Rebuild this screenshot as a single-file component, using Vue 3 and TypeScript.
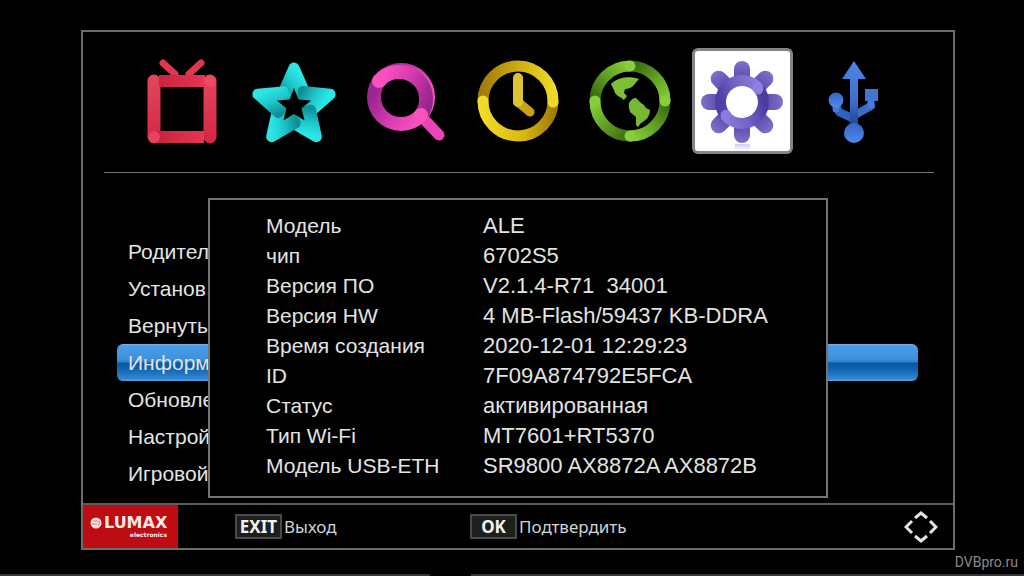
<script setup lang="ts">
import { ref } from 'vue'

interface InfoRow {
  label: string
  value: string
}

const tabs = [
  { id: 'tv', title: 'TV' },
  { id: 'star', title: 'Favourites' },
  { id: 'search', title: 'Search' },
  { id: 'clock', title: 'Time' },
  { id: 'globe', title: 'Network' },
  { id: 'gear', title: 'Settings' },
  { id: 'usb', title: 'USB' },
]
const activeTab = ref('gear')

const menu: string[] = ['Родител', 'Установ', 'Вернуть', 'Информ', 'Обновле', 'Настрой', 'Игровой']
const selected = ref(3)

const info: InfoRow[] = [
  { label: 'Модель', value: 'ALE' },
  { label: 'чип', value: '6702S5' },
  { label: 'Версия ПО', value: 'V2.1.4-R71  34001' },
  { label: 'Версия HW', value: '4 MB-Flash/59437 KB-DDRA' },
  { label: 'Время создания', value: '2020-12-01 12:29:23' },
  { label: 'ID', value: '7F09A874792E5FCA' },
  { label: 'Статус', value: 'активированная' },
  { label: 'Тип Wi-Fi', value: 'MT7601+RT5370' },
  { label: 'Модель USB-ETH', value: 'SR9800 AX8872A AX8872B' },
]

const armAngles = [0, 72, 144, 216, 288]
const toothAngles = [0, 45, 90, 135, 180, 225, 270, 315]
</script>

<template>
  <div class="screen">
    <div class="frame">
      <nav class="tabs">
        <button
          v-for="tab in tabs"
          :key="tab.id"
          type="button"
          class="tab"
          :class="{ active: tab.id === activeTab }"
          :aria-label="tab.title"
          @click="activeTab = tab.id"
        >
          <svg v-if="tab.id === 'tv'" class="icon" viewBox="-50 -50 100 100" fill="none" stroke-linecap="round">
            <defs>
              <linearGradient id="tvH" x1="-35" y1="0" x2="35" y2="0" gradientUnits="userSpaceOnUse">
                <stop offset="0" stop-color="#c0203a" /><stop offset="1" stop-color="#f03a58" />
              </linearGradient>
              <linearGradient id="tvV" x1="0" y1="-26" x2="0" y2="42" gradientUnits="userSpaceOnUse">
                <stop offset="0" stop-color="#e2465c" /><stop offset="1" stop-color="#d42742" />
              </linearGradient>
            </defs>
            <path d="M-19 -38L-7 -27M19 -38L7 -27" stroke="#dc3850" stroke-width="7" />
            <path d="M-28 -20V36M28 -20V36" stroke="url(#tvV)" stroke-width="13" />
            <path d="M-23 -20H23M-28 36H22" stroke="url(#tvH)" stroke-width="12" stroke-linecap="butt" />
            <circle cx="-28" cy="36" r="6" fill="#e8425c" />
            <circle cx="28" cy="-20" r="6" fill="#e84a64" />
          </svg>

          <svg v-else-if="tab.id === 'star'" class="icon" viewBox="-50 -50 100 100">
            <defs>
              <linearGradient id="arm" x1="-12" y1="-12" x2="7" y2="-30" gradientUnits="userSpaceOnUse">
                <stop offset="0" stop-color="#0e8f95" /><stop offset="0.5" stop-color="#1cc6ca" /><stop offset="1" stop-color="#2ce6e6" />
              </linearGradient>
            </defs>
            <g transform="translate(0 5)">
              <g v-for="a in armAngles" :key="a" :transform="`rotate(${a})`">
                <path d="M0 -38L10 -15L4 -9L-11 -13Z" fill="url(#arm)" stroke="url(#arm)" stroke-width="11" stroke-linejoin="round" />
              </g>
              <path d="M0 -18L4.500 -6.500L17 -5.600L7.500 2.400L10.600 14.600L0 8L-10.600 14.600L-7.500 2.400L-17 -5.600L-4.500 -6.500Z" fill="#000" />
            </g>
          </svg>

          <svg v-else-if="tab.id === 'search'" class="icon" viewBox="-50 -50 100 100" fill="none" stroke-linecap="round">
            <defs>
              <linearGradient id="lensA" x1="-26" y1="-20" x2="23" y2="0" gradientUnits="userSpaceOnUse">
                <stop offset="0" stop-color="#fa4fc0" /><stop offset="0.5" stop-color="#d63cb0" /><stop offset="1" stop-color="#98268f" />
              </linearGradient>
              <linearGradient id="lensB" x1="15" y1="15" x2="-31" y2="-10" gradientUnits="userSpaceOnUse">
                <stop offset="0" stop-color="#fc52bd" /><stop offset="0.5" stop-color="#d63bb2" /><stop offset="1" stop-color="#97268d" />
              </linearGradient>
            </defs>
            <path d="M15 15L33 34" stroke="#ea45b4" stroke-width="11" />
            <circle cx="-5" cy="-4" r="27" stroke="url(#lensB)" stroke-width="14" />
            <path d="M-27 -20A27 27 0 0 1 14.100 15" stroke="url(#lensA)" stroke-width="14" stroke-linecap="butt" />
            <circle cx="-27" cy="-20" r="7" fill="#fa50c0" />
            <circle cx="15" cy="14" r="7" fill="#fc52bd" />
          </svg>

          <svg v-else-if="tab.id === 'clock'" class="icon" viewBox="-50 -50 100 100" fill="none" stroke-linecap="round">
            <defs>
              <linearGradient id="dialA" x1="-36" y1="0" x2="36" y2="0" gradientUnits="userSpaceOnUse">
                <stop offset="0" stop-color="#a27c08" /><stop offset="0.550" stop-color="#d0b010" /><stop offset="1" stop-color="#f0da28" />
              </linearGradient>
              <linearGradient id="dialB" x1="-36" y1="0" x2="36" y2="0" gradientUnits="userSpaceOnUse">
                <stop offset="0" stop-color="#f0da28" /><stop offset="0.550" stop-color="#dcbb10" /><stop offset="1" stop-color="#a27c08" />
              </linearGradient>
            </defs>
            <path d="M35 0A35 35 0 0 1 -35 0" stroke="url(#dialB)" stroke-width="11" stroke-linecap="butt" />
            <path d="M-35 0A35 35 0 0 1 35 0" stroke="url(#dialA)" stroke-width="11" stroke-linecap="butt" />
            <circle cx="-35" cy="0" r="5.500" fill="#f0da2a" />
            <circle cx="35" cy="1" r="5.500" fill="#f0da28" />
            <path d="M0 1L12 11" stroke="#c4a418" stroke-width="9" />
            <path d="M0 -23V1" stroke="#dcc430" stroke-width="10" />
          </svg>

          <svg v-else-if="tab.id === 'globe'" class="icon" viewBox="-50 -50 100 100" fill="none">
            <defs>
              <linearGradient id="arc" x1="-33" y1="0" x2="2" y2="-36" gradientUnits="userSpaceOnUse">
                <stop offset="0" stop-color="#37680f" /><stop offset="0.500" stop-color="#61a024" /><stop offset="1" stop-color="#8ad03a" />
              </linearGradient>
              <linearGradient id="arcBack" x1="-36" y1="0" x2="0" y2="36" gradientUnits="userSpaceOnUse">
                <stop offset="0" stop-color="#8ad03a" /><stop offset="0.500" stop-color="#61a024" /><stop offset="1" stop-color="#37680f" />
              </linearGradient>
            </defs>
            <path d="M-35 0A35 35 0 0 0 0 35" stroke="url(#arcBack)" stroke-width="11" />
            <path d="M-35 0A35 35 0 0 0 0 35" stroke="url(#arcBack)" stroke-width="11" transform="rotate(-90)" />
            <path d="M-35 0A35 35 0 0 1 0 -35" stroke="url(#arc)" stroke-width="11" />
            <path d="M-35 0A35 35 0 0 1 0 -35" stroke="url(#arc)" stroke-width="11" transform="rotate(90)" />
            <g fill="#88ce39">
              <circle cx="0" cy="-35" r="5.500" />
              <circle cx="35" cy="0" r="5.500" />
              <circle cx="-35" cy="0" r="5.500" />
              <circle cx="0" cy="35" r="5.500" />
            </g>
            <path d="M-19 -17C-13 -23 -2 -26 9 -22L3 -15Q0 -12 -5 -12L-6 -8L-3 -5L-6 -1C-9 -4 -15 -5 -16 -11Z" fill="#7dc038" />
            <path d="M-1 2Q2 -3 6 -3L11 2Q14 3 16 7L20 9C20 16 15 20 11 22L8 26L6 24L6 16L0 11Q-2 6 -1 2Z" fill="#77b834" />
          </svg>

          <svg v-else-if="tab.id === 'gear'" class="icon" viewBox="-50 -50 100 100" fill="none">
            <defs>
              <linearGradient id="tooth" x1="0" y1="-41" x2="0" y2="-20" gradientUnits="userSpaceOnUse">
                <stop offset="0" stop-color="#8071cc" /><stop offset="1" stop-color="#5645a8" />
              </linearGradient>
              <linearGradient id="hubA" x1="-20" y1="0" x2="20" y2="-14" gradientUnits="userSpaceOnUse">
                <stop offset="0" stop-color="#5040a6" /><stop offset="0.450" stop-color="#7464c6" /><stop offset="1" stop-color="#9080e2" />
              </linearGradient>
              <linearGradient id="hubB" x1="-18" y1="14" x2="22" y2="0" gradientUnits="userSpaceOnUse">
                <stop offset="0" stop-color="#8c7cdf" /><stop offset="0.500" stop-color="#7262c4" /><stop offset="1" stop-color="#4c3ca0" />
              </linearGradient>
              <linearGradient id="mirror" x1="0" y1="43" x2="0" y2="50" gradientUnits="userSpaceOnUse">
                <stop offset="0" stop-color="#d3cbed" /><stop offset="1" stop-color="#fff" />
              </linearGradient>
            </defs>
            <path d="M-7 50V43H8V50Z" fill="url(#mirror)" />
            <g transform="translate(0 1)">
              <path v-for="a in toothAngles" :key="a" :transform="`rotate(${a})`" d="M-8 -18V-33A8 8 0 0 1 8 -33V-18Z" fill="url(#tooth)" />
              <path d="M17 -13A21 21 0 0 1 -17 13" stroke="url(#hubB)" stroke-width="11" />
              <path d="M-17 13A21 21 0 0 1 17 -13" stroke="url(#hubA)" stroke-width="11" />
              <circle cx="16" cy="-13" r="5.500" fill="#8f7fe0" />
              <circle cx="-16" cy="13" r="5.500" fill="#8b7bdd" />
              <circle r="15.500" fill="#fff" />
            </g>
          </svg>

          <svg v-else class="icon" viewBox="-50 -50 100 100" fill="none" stroke-linecap="round">
            <defs>
              <linearGradient id="stem" x1="0" y1="-40" x2="0" y2="25" gradientUnits="userSpaceOnUse">
                <stop offset="0" stop-color="#4c86ea" /><stop offset="0.600" stop-color="#3f70cc" /><stop offset="1" stop-color="#1d458f" />
              </linearGradient>
              <linearGradient id="ball" x1="0" y1="0" x2="0" y2="1">
                <stop offset="0" stop-color="#3567c4" /><stop offset="1" stop-color="#5288ea" />
              </linearGradient>
            </defs>
            <path d="M-17 6L-15 11L-2 17" stroke="#2f61be" stroke-width="8" stroke-linejoin="round" />
            <path d="M17 5L1 14" stroke="#3a6bc8" stroke-width="8" />
            <path d="M-18 4V8M17 -1V4" stroke="#447bdc" stroke-width="7" />
            <path d="M0 -40L12 -22H4V26H-4V-22H-12Z" fill="url(#stem)" />
            <circle cx="-18" cy="-1" r="7.500" fill="url(#ball)" />
            <rect x="11" y="-12" width="13" height="12" fill="#4177d4" />
            <circle cx="0" cy="32" r="10" fill="url(#ball)" />
          </svg>
        </button>
      </nav>

      <hr class="rule" />

      <main class="content">
        <ul class="menu">
          <li v-for="(item, i) in menu" :key="item">
            <button type="button" class="menu-item" :class="{ selected: i === selected }" @click="selected = i">{{ item }}</button>
          </li>
        </ul>

        <section class="dialog" role="dialog">
          <table class="info">
            <tbody>
              <tr v-for="row in info" :key="row.label">
                <th scope="row">{{ row.label }}</th>
                <td>{{ row.value }}</td>
              </tr>
            </tbody>
          </table>
        </section>
      </main>

      <footer class="bar">
        <div class="brand">
          <div class="brand-line">
            <svg class="brand-mark" viewBox="0 0 12 12">
              <circle cx="6" cy="6" r="5.500" fill="#ffe3e0" />
              <path d="M3 4H8M2 7H7M8 9Q10 7 9 4" stroke="#e0706c" stroke-width="1" fill="none" />
            </svg>
            <span class="brand-name">LUMAX</span>
          </div>
          <span class="brand-sub">electronics</span>
        </div>
        <button type="button" class="hint"><kbd>EXIT</kbd><span>Выход</span></button>
        <button type="button" class="hint"><kbd>OK</kbd><span>Подтвердить</span></button>
        <svg class="arrows" viewBox="0 0 34 34" fill="none" stroke="#dfe8e0" stroke-width="3">
          <path d="M11 8L17 3L23 8M11 26L17 31L23 26M8 11L2 17L8 23M26 11L32 17L26 23" />
        </svg>
      </footer>
    </div>

    <div class="credit">DVBpro.ru</div>
    <div class="edge"></div>
  </div>
</template>

<style>
body {
  margin: 0;
  background: #000;
}
</style>

<style scoped>
.screen {
  box-sizing: border-box;
  min-height: 100vh;
  padding-top: 30px;
  display: flex;
  flex-direction: column;
  background: #000;
  color: #e2e4e2;
  font-family: "Liberation Sans", Arial, sans-serif;
}

button {
  margin: 0;
  padding: 0;
  border: 0;
  background: none;
  color: inherit;
  font: inherit;
  text-align: left;
}

.frame {
  flex: 1;
  display: flex;
  flex-direction: column;
  margin: 0 69px 0 81px;
  border: 2px solid #6c6c6c;
}

.tabs {
  display: grid;
  grid-template-columns: repeat(7, 1fr);
  justify-items: center;
  padding: 16px 43px 18px;
}

.tab {
  box-sizing: border-box;
  width: 101px;
  height: 106px;
  display: flex;
  align-items: center;
  justify-content: center;
  border: 3px solid transparent;
  border-radius: 6px;
}

.tab.active {
  border-color: #858585;
  background: #fff;
}

.icon {
  flex: none;
  width: 100px;
  height: 100px;
}

.rule {
  margin: 0 19px 0 21px;
  border: 0;
  border-top: 1px solid #747474;
}

.content {
  position: relative;
  flex: 1;
  padding: 60px 35px 11px 34px;
}

.menu {
  margin: 0;
  padding: 0;
  list-style: none;
}

.menu-item {
  box-sizing: border-box;
  display: block;
  width: 100%;
  height: 37px;
  padding-left: 11px;
  border-radius: 6px;
  font-size: 21px;
  line-height: 37px;
}

.menu-item.selected {
  background: linear-gradient(#7fb4e0 0, #4a9ce4 2px, #3e92de 40%, #2b7fcb 49%, #0a57a4 51%, #0f60ae 65%, #2f88d4 94%, #66a4d8 100%);
}

.dialog {
  position: absolute;
  top: 25px;
  left: 125px;
  right: 125px;
  padding: 11px 20px 15px 56px;
  border: 2px solid #747474;
  background: #000;
}

.info {
  border-collapse: collapse;
  font-size: 21px;
  line-height: 30px;
}

.info th,
.info td {
  padding: 0;
  font-weight: 400;
  text-align: left;
  white-space: pre;
}

.info th {
  width: 217px;
}

.info td {
  font-size: 22px;
}

.bar {
  display: grid;
  grid-template-columns: 152px 235px 1fr auto;
  align-items: center;
  height: 43px;
  padding-right: 15px;
  border-top: 2px solid #5c5c5c;
}

.brand {
  box-sizing: border-box;
  width: 95px;
  height: 43px;
  padding: 10px 11px 0 7px;
  background: #bd0c12;
  color: #ffe9e6;
  font-family: "DejaVu Sans", sans-serif;
  font-weight: 700;
}

.brand-line {
  display: flex;
  align-items: center;
  gap: 2px;
}

.brand-mark {
  flex: none;
  width: 12px;
  height: 12px;
}

.brand-name {
  font-size: 16px;
  line-height: 16px;
}

.brand-sub {
  display: block;
  font-size: 6px;
  line-height: 7px;
  text-align: right;
}

.hint {
  display: flex;
  align-items: center;
  gap: 2px;
  font-family: "Noto Sans", sans-serif;
  font-size: 17px;
  line-height: 21px;
  color: #ccd4d8;
}

.hint kbd {
  box-sizing: border-box;
  min-width: 47px;
  border: 2px solid #484b48;
  background: #1c1f1c;
  color: #f2f2f2;
  font-family: "Noto Sans", sans-serif;
  font-weight: 700;
  text-align: center;
}

.arrows {
  width: 34px;
  height: 34px;
}

.credit {
  padding-right: 6px;
  color: #8a8a8a;
  font-family: Roboto, sans-serif;
  font-size: 14px;
  line-height: 24px;
  text-align: right;
}

.edge {
  height: 2px;
  background: linear-gradient(90deg, #383435 42%, #000 42%, #000 46%, #383435 46%);
}
</style>
